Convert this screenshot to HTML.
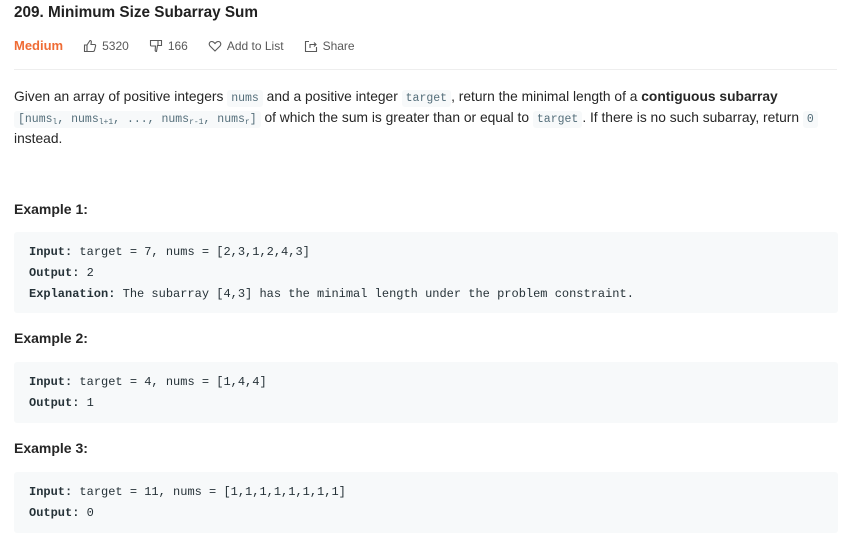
<!DOCTYPE html>
<html><head><meta charset="utf-8"><style>
body{margin:0;background:#fff;font-family:"Liberation Sans",sans-serif;color:#262626;width:845px;height:536px;overflow:hidden}
.t{position:absolute;left:14px;top:4px;font-size:15.3px;font-weight:600;color:#212121}
.row{position:absolute;left:14px;top:38px;font-size:12px;color:#595959;display:flex;align-items:center}
.row span{display:inline-flex;align-items:center;margin-right:20px}
.row svg{margin-right:5px}
.med{color:#ef6c35;font-weight:600;font-size:13px}
.hr{position:absolute;left:14px;right:8px;top:69px;border-top:1px solid #eee}
p{position:absolute;left:14px;top:86px;margin:0;font-size:13.8px;line-height:21px;white-space:nowrap}
code{font-family:"Liberation Mono",monospace;font-size:11.5px;background:#f7f9fa;color:#546e7a;padding:2px 4px;border-radius:3px;line-height:0}
sub{font-size:8px;line-height:0;vertical-align:-2px}
h4{position:absolute;left:14px;margin:0;font-size:14px;font-weight:bold}
pre{position:absolute;left:14px;width:824px;margin:0;background:#f7f9fa;border-radius:3px;font-family:"Liberation Mono",monospace;font-size:12px;line-height:21px;padding:10px 15px;box-sizing:border-box;color:#263238}
pre b{font-weight:bold}
</style></head><body>
<div class="t">209. Minimum Size Subarray Sum</div>
<div class="row"><span class="med">Medium</span>
<span><svg width="14" height="14" viewBox="0 0 14 14" fill="none" stroke="#595959" stroke-width="1.1"><path d="M1.5 6h2.5v6.5H1.5z M4 6l3-4.5c1 0 1.5.7 1.3 1.7L8 5.5h3.5c.8 0 1.3.7 1.1 1.4l-1.2 4.7c-.2.6-.7.9-1.3.9H4"/></svg>5320</span>
<span><svg width="14" height="14" viewBox="0 0 14 14" fill="none" stroke="#595959" stroke-width="1.1"><path d="M1.5 1.5h11v5h-4l-1 6c-1 0-1.5-.7-1.3-1.7L6.5 7H2.5c-.8 0-1.1-.5-1-1.2z M9 1.5v5"/></svg>166</span>
<span><svg width="14" height="14" viewBox="0 0 14 14" fill="none" stroke="#595959" stroke-width="1.1"><path d="M7 12L2 7C0.5 5.3 1.3 2.5 3.8 2.5c1.4 0 2.4 1 3.2 2 .8-1 1.8-2 3.2-2 2.5 0 3.3 2.8 1.8 4.5z"/></svg>Add to List</span>
<span><svg width="14" height="14" viewBox="0 0 14 14" fill="none" stroke="#595959" stroke-width="1.1"><path d="M5 2.5H1.5v10h11V8 M6 9V5.5h6 M10 3.5l2 2-2 2"/></svg>Share</span></div>
<div class="hr"></div>
<p>Given an array of positive integers <code>nums</code> and a positive integer <code>target</code>, return the minimal length of a <b>contiguous subarray</b><br><code>[nums<sub>l</sub>, nums<sub>l+1</sub>, ..., nums<sub>r-1</sub>, nums<sub>r</sub>]</code> of which the sum is greater than or equal to <code>target</code>. If there is no such subarray, return <code>0</code><br>instead.</p>
<h4 style="top:201px">Example 1:</h4>
<pre style="top:232px;height:81px"><b>Input:</b> target = 7, nums = [2,3,1,2,4,3]
<b>Output:</b> 2
<b>Explanation:</b> The subarray [4,3] has the minimal length under the problem constraint.</pre>
<h4 style="top:330px">Example 2:</h4>
<pre style="top:362px;height:61px"><b>Input:</b> target = 4, nums = [1,4,4]
<b>Output:</b> 1</pre>
<h4 style="top:440px">Example 3:</h4>
<pre style="top:472px;height:61px"><b>Input:</b> target = 11, nums = [1,1,1,1,1,1,1,1]
<b>Output:</b> 0</pre>
</body></html>
